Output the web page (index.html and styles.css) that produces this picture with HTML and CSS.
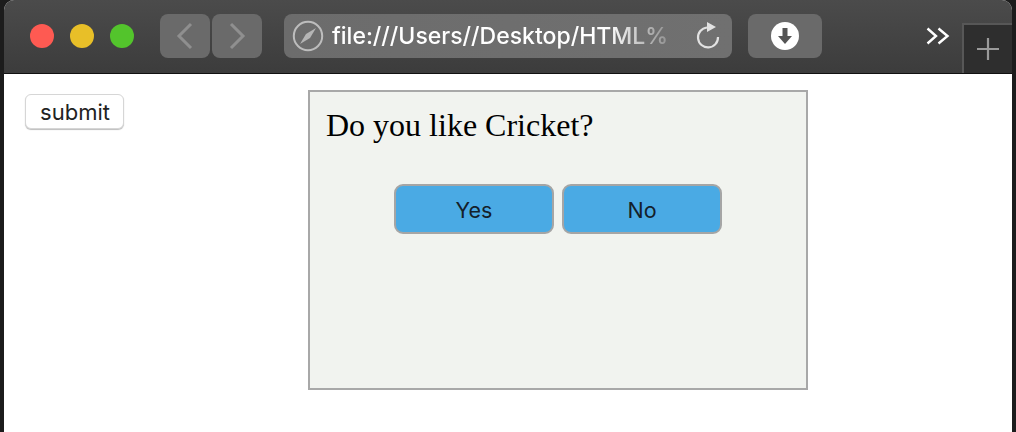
FILE: index.html
```html
<!DOCTYPE html>
<html lang="en">
<head>
<meta charset="utf-8">
<title>Do you like Cricket?</title>
<link rel="stylesheet" href="styles.css">
</head>
<body>
<div class="window">
  <header class="toolbar">
    <div class="lights">
      <span class="light red"></span>
      <span class="light yellow"></span>
      <span class="light green"></span>
    </div>
    <div class="nav">
      <div class="tool nav-btn">
        <svg width="20" height="28" viewBox="0 0 20 28"><path d="M16 2 4 14l12 12" fill="none" stroke="#8f8f8f" stroke-width="3"/></svg>
      </div>
      <div class="tool nav-btn">
        <svg width="20" height="28" viewBox="0 0 20 28"><path d="M4 2l12 12L4 26" fill="none" stroke="#8f8f8f" stroke-width="3"/></svg>
      </div>
    </div>
    <div class="tool address">
      <svg class="compass" width="32" height="32" viewBox="0 0 32 32">
        <circle cx="16" cy="16" r="14.200" fill="none" stroke="#bdbdbd" stroke-width="2"/>
        <path d="M24 8 18 18 8 24 14 14Z" fill="#b5b5b5"/>
      </svg>
      <span class="url">file:///Users//Desktop/HTML%</span>
      <svg class="reload" width="28" height="32" viewBox="0 0 28 32">
        <path d="M13 7.500A10 10 0 1 0 24 17" fill="none" stroke="#e2e2e2" stroke-width="2.200"/>
        <path d="M13 2l9 5-9 5Z" fill="#e2e2e2"/>
      </svg>
    </div>
    <div class="tool download">
      <svg width="28" height="28" viewBox="0 0 28 28">
        <circle cx="14" cy="14" r="14" fill="#fff"/>
        <path d="M11.500 6h5v8H21l-7 8-7-8h4.500Z" fill="#555"/>
      </svg>
    </div>
    <svg class="more" width="24" height="18" viewBox="0 0 24 18">
      <path d="M1.500 1.500 10 9l-8.500 7.500M12.500 1.500 21.500 9l-9 7.500" fill="none" stroke="#fff" stroke-width="2.400"/>
    </svg>
    <div class="new-tab">
      <svg width="24" height="24" viewBox="0 0 24 24"><path d="M12 1v22M1 12h22" stroke="#9a9a9a" stroke-width="2.200"/></svg>
    </div>
  </header>
  <main class="page">
    <button class="submit" type="button">submit</button>
    <section class="dialog">
      <p class="question">Do you like Cricket?</p>
      <div class="answers">
        <button class="answer" type="button">Yes</button>
        <button class="answer" type="button">No</button>
      </div>
    </section>
  </main>
</div>
</body>
</html>
```
FILE: styles.css
```css
html, body {
  margin: 0;
  height: 100%;
  background: #1c1c1c;
  overflow: hidden;
}
.window {
  box-sizing: border-box;
  width: 1008px;
  height: 432px;
  margin-left: 4px;
  display: flex;
  flex-direction: column;
  background: #fff;
  border-top-left-radius: 10px;
  border-top-right-radius: 10px;
  overflow: hidden;
}
.toolbar {
  box-sizing: border-box;
  flex: none;
  height: 74px;
  display: flex;
  align-items: flex-start;
  background: linear-gradient(#4b4b4b, #3c3c3c);
  border-bottom: 1px solid #111;
}
.lights {
  display: flex;
  gap: 16px;
  margin: 24px 0 0 26px;
}
.light {
  width: 24px;
  height: 24px;
  border-radius: 50%;
}
.red { background: #fe5a52; }
.yellow { background: #e8bf28; }
.green { background: #53c42c; }
.tool {
  height: 44px;
  background: #6a6a6a;
  border-radius: 8px;
  display: flex;
  align-items: center;
  justify-content: center;
}
.nav {
  display: flex;
  gap: 2px;
  margin: 14px 0 0 26px;
}
.nav-btn { width: 50px; }
.address {
  box-sizing: border-box;
  width: 448px;
  margin: 14px 0 0 22px;
  padding: 0 10px 0 8px;
  justify-content: flex-start;
  background: linear-gradient(90deg, #6c6c6c, #707070);
}
.compass { flex: none; }
.url {
  flex: 1;
  margin-left: 8px;
  font: 500 23px/32px Inter, "Liberation Sans", Arial, sans-serif;
  color: #fff;
  white-space: nowrap;
  overflow: hidden;
  -webkit-mask-image: linear-gradient(90deg, #000 78%, rgba(0,0,0,.1) 98%);
  mask-image: linear-gradient(90deg, #000 78%, rgba(0,0,0,.1) 98%);
}
.reload { flex: none; margin-left: 8px; }
.download {
  width: 74px;
  margin: 14px 0 0 16px;
}
.more {
  margin: 27px 0 0 104px;
}
.new-tab {
  box-sizing: border-box;
  width: 50px;
  height: 50px;
  margin: 23px 0 0 12px;
  background: #2e2e2e;
  border-top: 2px solid #575757;
  border-left: 2px solid #575757;
  display: flex;
  align-items: center;
  justify-content: center;
}
.page {
  flex: 1;
  display: flex;
  align-items: flex-start;
  padding: 16px 0 0 21px;
}
.submit {
  box-sizing: border-box;
  width: 99px;
  height: 35px;
  margin-top: 4px;
  padding: 0 0 0 1px;
  background: #fff;
  border: 1px solid #d6d6d6;
  border-radius: 6px;
  box-shadow: 0 1px 1px #bdbdbd;
  font: 22px/30px Inter, "Liberation Sans", Arial, sans-serif;
  color: #222;
}
.dialog {
  box-sizing: border-box;
  width: 500px;
  height: 300px;
  margin-left: 184px;
  padding: 14px 16px;
  background: #f1f3ef;
  border: 2px solid #a8a8a8;
}
.question {
  margin: 0;
  font: 32px/38px "Liberation Serif", "Times New Roman", serif;
  color: #000;
}
.answers {
  display: flex;
  gap: 8px;
  margin: 40px 0 0 68px;
}
.answer {
  box-sizing: border-box;
  width: 160px;
  height: 50px;
  padding: 2px 0 0;
  background: #4aaae4;
  border: 2px solid #a5a5a5;
  border-radius: 9px;
  font: 21.500px/26px Inter, "Liberation Sans", Arial, sans-serif;
  color: #14202a;
}
```
